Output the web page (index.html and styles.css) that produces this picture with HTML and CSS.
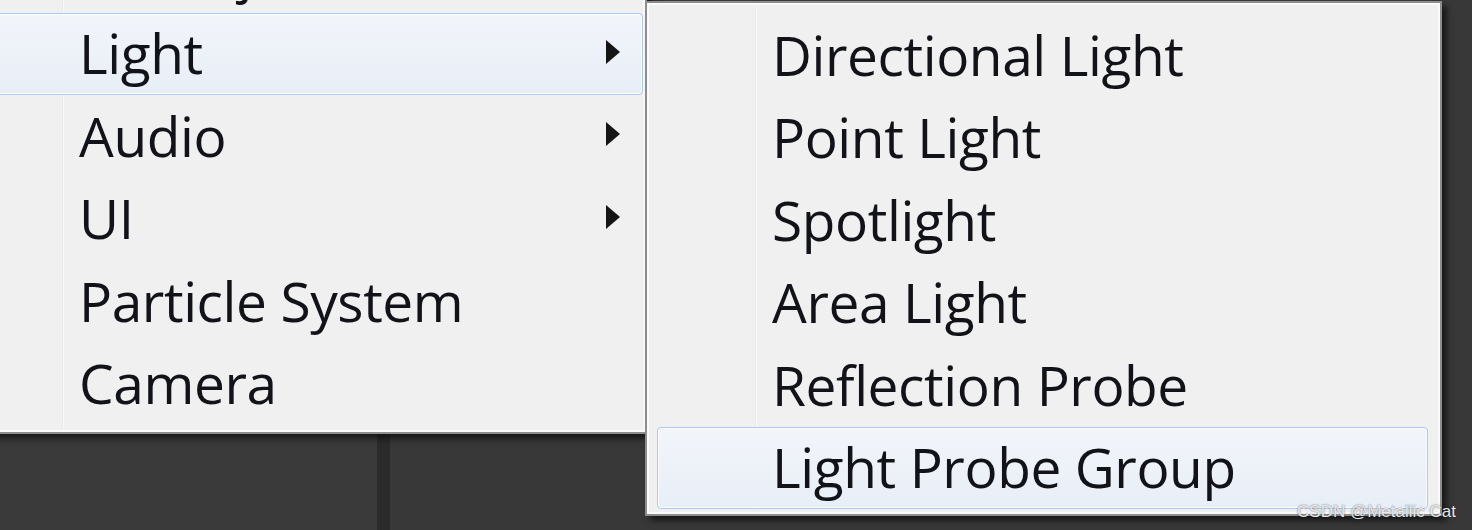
FILE: index.html
```html
<!DOCTYPE html>
<html lang="en">
<head>
<meta charset="utf-8">
<title>Unity GameObject menu</title>
<link rel="stylesheet" href="styles.css">
</head>
<body>
<div class="screen">
  <div class="menu menu-main">
    <div class="item"><span class="label">2D Object</span><span class="arrow"></span></div>
    <div class="item active"><span class="label">Light</span><span class="arrow"></span></div>
    <div class="item"><span class="label">Audio</span><span class="arrow"></span></div>
    <div class="item"><span class="label">UI</span><span class="arrow"></span></div>
    <div class="item"><span class="label">Particle System</span></div>
    <div class="item"><span class="label">Camera</span></div>
  </div>
  <div class="menu menu-sub">
    <div class="item"><span class="label">Directional Light</span></div>
    <div class="item"><span class="label">Point Light</span></div>
    <div class="item"><span class="label">Spotlight</span></div>
    <div class="item"><span class="label">Area Light</span></div>
    <div class="item"><span class="label">Reflection Probe</span></div>
    <div class="item active"><span class="label">Light Probe Group</span></div>
  </div>
  <div class="watermark">CSDN @Metallic Cat</div>
</div>
</body>
</html>
```

FILE: styles.css
```css
html, body {
  margin: 0;
  padding: 0;
}
body {
  width: 1472px;
  height: 530px;
  overflow: hidden;
  background: linear-gradient(to right, #3a3a3a 0 377px, #2b2b2b 377px 390px, #383838 390px);
  font-family: "Open Sans", "Noto Sans", sans-serif;
  color: #000;
}
.screen {
  position: relative;
  width: 1472px;
  height: 530px;
}
.menu {
  position: absolute;
  box-sizing: border-box;
  background: #f0f0f0;
  border: 2px solid #8d8d8d;
  box-shadow: inset 0 0 0 2px #fafafa, 5px 5px 6px rgba(0, 0, 0, 0.55);
  display: flex;
  flex-direction: column;
}
.menu::before {
  content: "";
  position: absolute;
  top: 4px;
  bottom: 4px;
  width: 2px;
  background: linear-gradient(to right, #e2e3e3, #ffffff);
}
.menu-main {
  left: -64px;
  top: -86px;
  width: 711px;
  height: 520px;
  padding: 14px 2px 6px 10px;
}
.menu-main::before { left: 124px; }
.menu-sub {
  left: 645px;
  top: 1px;
  width: 797px;
  height: 515px;
  padding: 11px 12px 5px 10px;
  z-index: 2;
}
.menu-sub::before { left: 108px; }
.item {
  position: relative;
  z-index: 1;
  box-sizing: border-box;
  height: 82.5px;
  display: flex;
  align-items: center;
  border: 1px solid transparent;
  border-radius: 4px;
}
.menu-main .item { padding-left: 130px; padding-right: 22px; }
.menu-sub .item { padding-left: 114px; }
.item.active {
  border-color: #aecaf0;
  background: linear-gradient(to bottom, #f2f5fa, #e8eef7);
  box-shadow: inset 0 0 0 1px #f8fbff;
}
.label {
  flex: 1;
  font-size: 55px;
  font-weight: 500;
  line-height: 1;
  letter-spacing: -0.4px;
  white-space: nowrap;
  padding-bottom: 2px;
  color: #111318;
}
.arrow {
  width: 0;
  height: 0;
  border-top: 12px solid transparent;
  border-bottom: 12px solid transparent;
  border-left: 14px solid #151515;
  margin-bottom: 4px;
}
.watermark {
  position: absolute;
  right: 16px;
  bottom: 8px;
  z-index: 3;
  font-family: "Liberation Sans", Arial, sans-serif;
  font-size: 17px;
  color: #e8e8e8;
  text-shadow: 0 0 2px rgba(0, 0, 0, 0.6);
}
```
